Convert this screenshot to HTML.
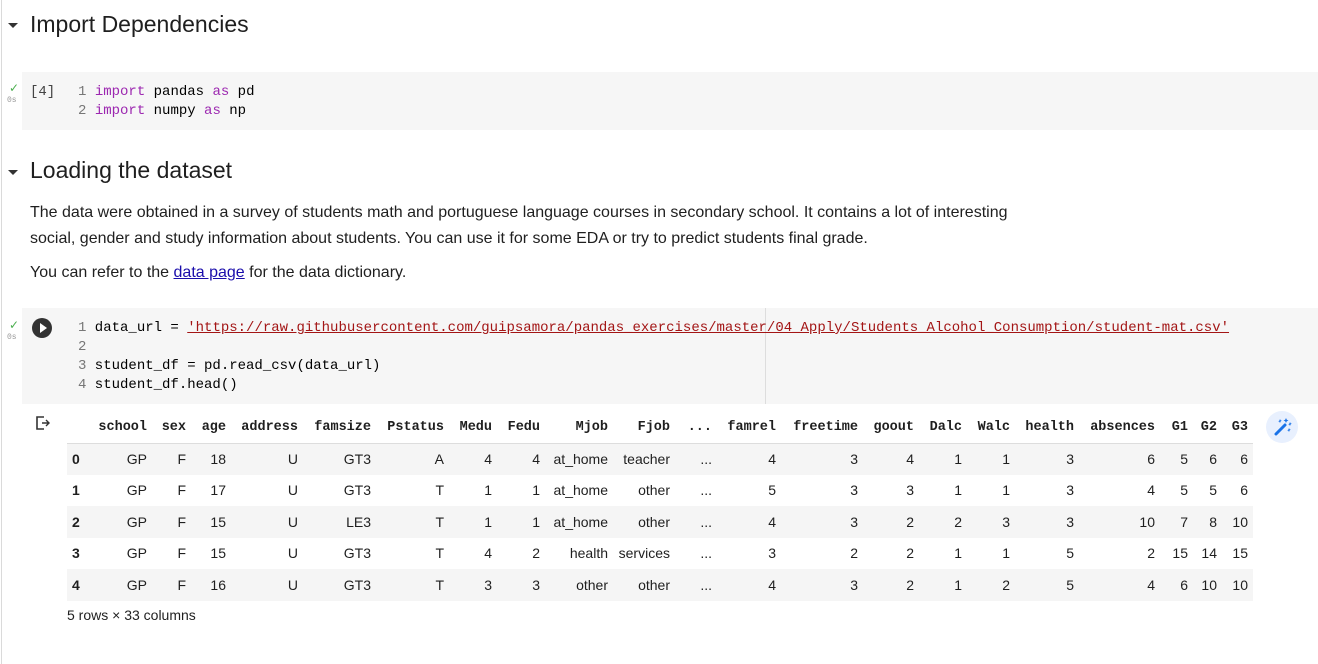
<!DOCTYPE html>
<html><head><meta charset="utf-8"><style>
*{margin:0;padding:0;box-sizing:border-box}
body{width:1318px;height:664px;overflow:hidden;background:#fff;font-family:"Liberation Sans",Arial,sans-serif;color:#1f1f1f;position:relative}
.abs{position:absolute}
.vline{left:1px;top:0;width:1px;height:664px;background:#dadada}
h2{position:absolute;font-weight:400;font-size:23px;color:#1f1f1f}
.tri{position:absolute;width:0;height:0;border-left:5px solid transparent;border-right:5px solid transparent;border-top:5px solid #333}
.cell{position:absolute;background:#f6f6f6}
.code{position:absolute;font-family:"Liberation Mono",monospace;font-size:14px;line-height:19px;white-space:pre;color:#000}
.ln{color:#777}
.kw{color:#9c27b0}
.str{color:#a31515;text-decoration:underline}
.check{position:absolute;color:#4caf50;font-size:12px}
.os{position:absolute;font-size:8px;color:#999;font-family:"Liberation Mono",monospace}
p{position:absolute;font-size:16px;line-height:26px;color:#1f1f1f}
a{color:#1a0dab;text-decoration:underline}
table{position:absolute;left:67px;top:413px;border-collapse:collapse;table-layout:fixed;font-size:14px}
th{font-family:"Liberation Mono",monospace;font-weight:bold;font-size:13.5px;text-align:right;height:30px;border-bottom:1px solid #ddd;white-space:nowrap}
td{text-align:right;height:31.5px;white-space:nowrap}
td:first-child{text-align:left;font-weight:bold;padding-left:5px}
tr.g td{background:#f5f5f5}
</style></head><body>
<div class="abs vline"></div>
<div class="tri" style="left:8px;top:23px"></div>
<h2 style="left:30px;top:11px">Import Dependencies</h2>

<div class="cell" style="left:22px;top:72px;width:1296px;height:58px"></div>
<div class="check" style="left:9px;top:81px">✓</div>
<div class="os" style="left:7px;top:96px">0s</div>
<div class="code" style="left:30px;top:83px;color:#444">[4]</div>
<div class="code" style="left:78px;top:83px"><span class="ln">1</span> <span class="kw">import</span> pandas <span class="kw">as</span> pd
<span class="ln">2</span> <span class="kw">import</span> numpy <span class="kw">as</span> np</div>

<div class="tri" style="left:8px;top:170px"></div>
<h2 style="left:30px;top:157px">Loading the dataset</h2>
<p style="left:30px;top:200px">The data were obtained in a survey of students math and portuguese language courses in secondary school. It contains a lot of interesting<br>social, gender and study information about students. You can use it for some EDA or try to predict students final grade.</p>
<p style="left:30px;top:260px">You can refer to the <a>data page</a> for the data dictionary.</p>

<div class="cell" style="left:22px;top:308px;width:1296px;height:96px"></div>
<div class="abs" style="left:765px;top:308px;width:1px;height:96px;background:#ddd"></div>
<div class="check" style="left:9px;top:318px">✓</div>
<div class="os" style="left:7px;top:333px">0s</div>
<div class="abs" style="left:32px;top:318px;width:20px;height:20px;border-radius:50%;background:#333"></div>
<div class="abs" style="left:40px;top:323px;width:0;height:0;border-top:5px solid transparent;border-bottom:5px solid transparent;border-left:7px solid #fff"></div>
<div class="code" style="left:78px;top:319px"><span class="ln">1</span> data_url = <span class="str">'https://raw.githubusercontent.com/guipsamora/pandas_exercises/master/04_Apply/Students_Alcohol_Consumption/student-mat.csv'</span>
<span class="ln">2</span>
<span class="ln">3</span> student_df = pd.read_csv(data_url)
<span class="ln">4</span> student_df.head()</div>

<svg class="abs" style="left:35px;top:416px" width="16" height="14" viewBox="0 0 16 14"><path d="M9 1H2v12h7" fill="none" stroke="#333" stroke-width="1.6"/><path d="M7 7h7M11 4l3 3-3 3" fill="none" stroke="#333" stroke-width="1.4"/></svg>
<div class="abs" style="left:1266px;top:411px;width:32px;height:32px;border-radius:50%;background:#e8f0fe"></div>
<svg class="abs" style="left:1270px;top:415px" width="24" height="24" viewBox="0 0 24 24"><path d="M6 19L15 10" stroke="#1a73e8" stroke-width="3" stroke-linecap="round"/><path d="M16 3l.8 1.7 1.7.8-1.7.8L16 8l-.8-1.7-1.7-.8 1.7-.8zM20 7l.6 1.2 1.2.6-1.2.6L20 11l-.6-1.2-1.2-.6 1.2-.6zM19 13l.6 1.2 1.2.6-1.2.6L19 17l-.6-1.2-1.2-.6 1.2-.6zM10 4l.6 1.2 1.2.6-1.2.6L10 8l-.6-1.2-1.2-.6 1.2-.6z" fill="#1a73e8"/></svg>

<table>
<colgroup><col style="width:28px"><col style="width:52px"><col style="width:39px"><col style="width:40px"><col style="width:72px"><col style="width:73px"><col style="width:73px"><col style="width:48px"><col style="width:48px"><col style="width:68px"><col style="width:62px"><col style="width:42px"><col style="width:64px"><col style="width:82px"><col style="width:56px"><col style="width:48px"><col style="width:48px"><col style="width:64px"><col style="width:81px"><col style="width:33px"><col style="width:29px"><col style="width:31px"><col style="width:5px"></colgroup>
<tr><th></th><th>school</th><th>sex</th><th>age</th><th>address</th><th>famsize</th><th>Pstatus</th><th>Medu</th><th>Fedu</th><th>Mjob</th><th>Fjob</th><th>...</th><th>famrel</th><th>freetime</th><th>goout</th><th>Dalc</th><th>Walc</th><th>health</th><th>absences</th><th>G1</th><th>G2</th><th>G3</th><th></th></tr>
<tr class="g"><td>0</td><td>GP</td><td>F</td><td>18</td><td>U</td><td>GT3</td><td>A</td><td>4</td><td>4</td><td>at_home</td><td>teacher</td><td>...</td><td>4</td><td>3</td><td>4</td><td>1</td><td>1</td><td>3</td><td>6</td><td>5</td><td>6</td><td>6</td><td></td></tr>
<tr><td>1</td><td>GP</td><td>F</td><td>17</td><td>U</td><td>GT3</td><td>T</td><td>1</td><td>1</td><td>at_home</td><td>other</td><td>...</td><td>5</td><td>3</td><td>3</td><td>1</td><td>1</td><td>3</td><td>4</td><td>5</td><td>5</td><td>6</td><td></td></tr>
<tr class="g"><td>2</td><td>GP</td><td>F</td><td>15</td><td>U</td><td>LE3</td><td>T</td><td>1</td><td>1</td><td>at_home</td><td>other</td><td>...</td><td>4</td><td>3</td><td>2</td><td>2</td><td>3</td><td>3</td><td>10</td><td>7</td><td>8</td><td>10</td><td></td></tr>
<tr><td>3</td><td>GP</td><td>F</td><td>15</td><td>U</td><td>GT3</td><td>T</td><td>4</td><td>2</td><td>health</td><td>services</td><td>...</td><td>3</td><td>2</td><td>2</td><td>1</td><td>1</td><td>5</td><td>2</td><td>15</td><td>14</td><td>15</td><td></td></tr>
<tr class="g"><td>4</td><td>GP</td><td>F</td><td>16</td><td>U</td><td>GT3</td><td>T</td><td>3</td><td>3</td><td>other</td><td>other</td><td>...</td><td>4</td><td>3</td><td>2</td><td>1</td><td>2</td><td>5</td><td>4</td><td>6</td><td>10</td><td>10</td><td></td></tr>
</table>
<div class="abs" style="left:67px;top:607px;font-size:14px">5 rows × 33 columns</div>
</body></html>
